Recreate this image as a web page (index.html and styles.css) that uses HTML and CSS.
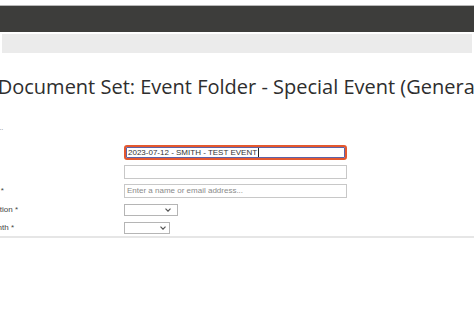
FILE: index.html
```html
<!DOCTYPE html>
<html>
<head>
<meta charset="utf-8">
<link rel="stylesheet" href="styles.css">
</head>
<body>
<div class="topbar"></div>
<div class="subbar"></div>
<h1 class="title">Edit Document Set: Event Folder - Special Event (General)</h1>
<div class="main">
  <p class="desc">Update the properties...</p>
  <div class="form">
    <div class="row">
      <span class="label">Name *</span>
      <div class="input focused"><span class="val">2023-07-12 - SMITH - TEST EVENT</span><span class="caret"></span></div>
    </div>
    <div class="row">
      <span class="label">Title</span>
      <div class="input"></div>
    </div>
    <div class="row">
      <span class="label">Event Coordinators *</span>
      <div class="input"><span class="ph">Enter a name or email address...</span></div>
    </div>
    <div class="row">
      <span class="label">Primary Event Location *</span>
      <div class="select s1"><svg width="6" height="4" viewBox="0 0 6 4"><path d="M0.5 0.7 L3 3.2 L5.5 0.7" fill="none" stroke="#555" stroke-width="1.2"/></svg></div>
    </div>
    <div class="row last">
      <span class="label">Event Invoicing Month *</span>
      <div class="select s2"><svg width="6" height="4" viewBox="0 0 6 4"><path d="M0.5 0.7 L3 3.2 L5.5 0.7" fill="none" stroke="#555" stroke-width="1.2"/></svg></div>
    </div>
  </div>
</div>
<div class="rule"></div>
</body>
</html>
```
FILE: styles.css
```css
html, body {
  margin: 0;
  padding: 0;
  background: #fff;
  overflow: hidden;
  width: 474px;
  height: 310px;
}
body {
  font-family: "Liberation Sans", Arial, sans-serif;
}
.topbar {
  margin-top: 5px;
  height: 26px;
  background: #3d3d3b;
  border-top: 1px solid #b8b8b8;
}
.subbar {
  margin: 2px 2px 0 2px;
  height: 19px;
  background: #ebebeb;
}
.title {
  margin: 22px 0 0 -43px;
  font-family: "Open Sans", sans-serif;
  font-weight: 400;
  font-size: 20px;
  line-height: 24px;
  color: #2e2e2e;
  white-space: nowrap;
}
.main {
  margin-left: -70px;
}
.desc {
  margin: 24px 0 0 0;
  font-size: 7px;
  line-height: 9px;
  color: #777;
  white-space: nowrap;
}
.form {
  margin-top: 11px;
  display: flex;
  flex-direction: column;
}
.row {
  height: 19px;
  display: flex;
  align-items: center;
}
.row.last {
  height: 17px;
}
.label {
  width: 194px;
  flex: none;
  font-size: 8px;
  color: #444;
  white-space: nowrap;
}
.input {
  box-sizing: border-box;
  width: 223px;
  height: 14px;
  border: 1px solid #c8c8c8;
  background: #fff;
  display: flex;
  align-items: center;
  padding-left: 2px;
  font-size: 8px;
  color: #333;
  white-space: nowrap;
}
.input.focused {
  height: 15px;
  border: 2px solid #e4582f;
  border-radius: 3px;
  box-shadow: inset 0 0 0 1px #5d63a8;
  padding-left: 2px;
}
.caret {
  width: 1px;
  height: 9px;
  background: #222;
  margin-left: 1px;
}
.ph {
  color: #8a8a8a;
}
.select {
  box-sizing: border-box;
  height: 12px;
  border: 1px solid #b5b5b5;
  background: #fff;
  display: flex;
  align-items: center;
  justify-content: flex-end;
}
.s1 {
  width: 54px;
  padding-right: 6px;
}
.s2 {
  width: 46px;
  padding-right: 3px;
}
.rule {
  height: 2px;
  background: #e6e6e6;
}
```
